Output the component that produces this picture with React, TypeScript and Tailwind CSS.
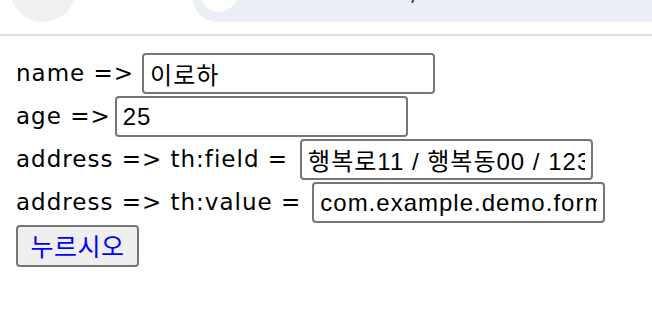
import React from 'react'

const inputCls =
  'w-[293px] h-[41px] border-2 border-[#767676] rounded-[4px] px-[6px] bg-white text-black text-[24px] font-["Liberation_Sans","Noto_Sans_CJK_KR",sans-serif] outline-none'

const rowCls = 'h-[43px] flex items-center whitespace-nowrap'

export default function App() {
  return (
    <div className="w-[652px] h-[330px] bg-white overflow-hidden">
      {/* browser chrome remnant */}
      <div className="h-[34px] flex items-start overflow-hidden border-b-2 border-[#dedede] box-content">
        <div className="ml-[10px] -mt-[44px] w-[66px] h-[66px] rounded-full bg-[#f0f0f0] shrink-0" />
        <div className="ml-[117px] -mt-[26px] h-[48px] flex-1 rounded-l-full bg-[#ebeef6] flex items-start relative">
          <div className="ml-[7px] w-[38px] h-[38px] rounded-full bg-white" />
          <div className="absolute left-[25px] top-[24px] w-[6px] h-[2px] bg-[#333]" />
          <div className="absolute left-[219px] top-[24px] w-[2px] h-[5px] bg-[#444] rotate-[20deg]" />
        </div>
      </div>

      <form
        className="px-[16px] pt-[16px] text-[23px] tracking-[1px] text-black font-['DejaVu_Sans','Noto_Sans_CJK_KR',sans-serif]"
        onSubmit={e => e.preventDefault()}
      >
        <div className={rowCls}>
          <span className="mr-[8px]">name =&gt;</span>
          <input className={inputCls} readOnly value="이로하" />
        </div>
        <div className={rowCls}>
          <span className="mr-[4px]">age =&gt;</span>
          <input className={inputCls} readOnly value="25" />
        </div>
        <div className={rowCls}>
          <span className="mr-[12px]">address =&gt; th:field =</span>
          <input className={inputCls} readOnly value="행복로11 / 행복동00 / 123-456" />
        </div>
        <div className={rowCls}>
          <span className="mr-[11px]">address =&gt; th:value =</span>
          <input className={inputCls} readOnly value="com.example.demo.form.Address@1a2b3c" />
        </div>
        <div className={rowCls}>
          <button
            type="submit"
            className="w-[123px] h-[42px] bg-[#efefef] border-2 border-[#767676] rounded-[4px] text-[#0000ff] text-[25px] tracking-[0.5px] leading-none font-['Noto_Sans_CJK_KR',sans-serif]"
          >
            누르시오
          </button>
        </div>
      </form>
    </div>
  )
}
